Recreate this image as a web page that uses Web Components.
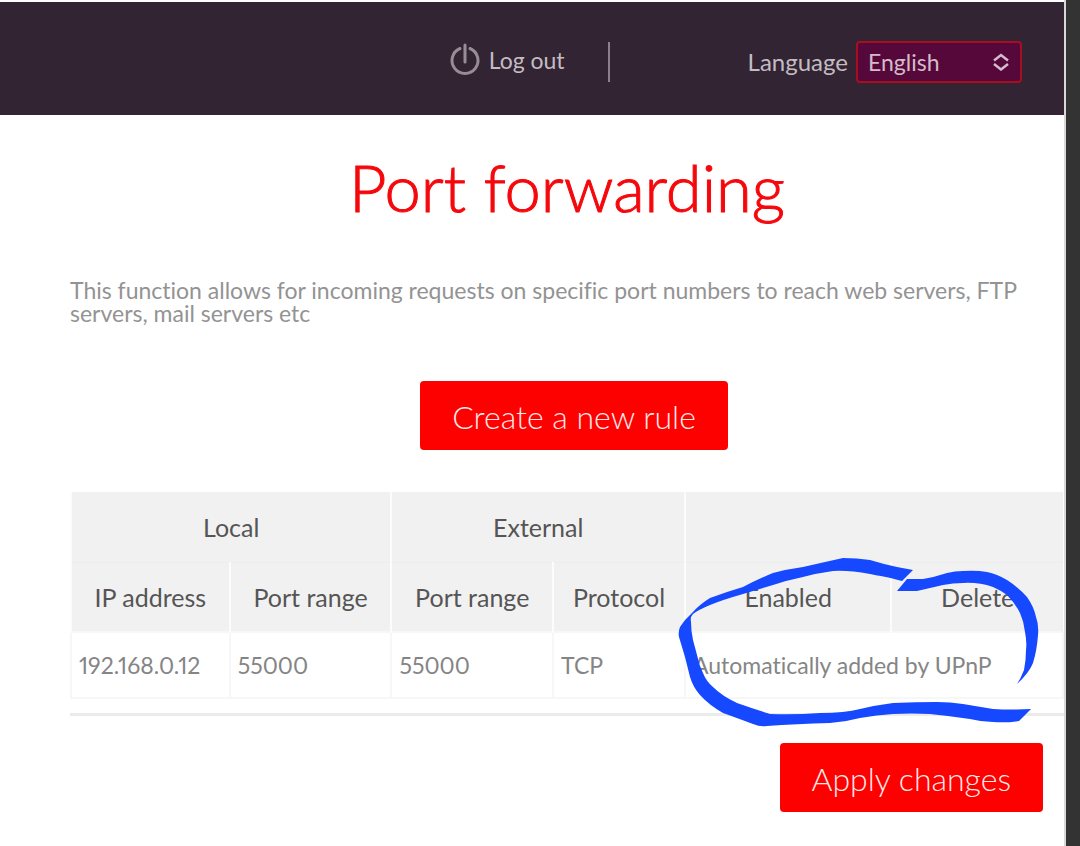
<!DOCTYPE html>
<html lang="en">
<head>
<meta charset="utf-8">
<meta name="viewport" content="width=device-width, initial-scale=1">
<title>Port forwarding</title>
<style>
html { background: #333333; }
body { margin: 0; min-height: 100vh; font-family: Lato, "Open Sans", sans-serif; font-variant-ligatures: none; font-variant-numeric: proportional-nums; }
</style>
</head>
<body>
<router-page>
  <router-header slot="header"></router-header>
  <page-title>Port forwarding</page-title>
  <page-intro>This function allows for incoming requests on specific port numbers to reach web servers, FTP servers, mail servers etc</page-intro>
  <action-row><action-button>Create a new rule</action-button></action-row>
  <rules-table></rules-table>
  <action-row align="end"><action-button>Apply changes</action-button></action-row>
</router-page>

<script>
class Base extends HTMLElement {
  constructor() {
    super();
    this.attachShadow({ mode: "open" }).innerHTML = this.constructor.markup;
  }
}

customElements.define("router-page", class extends Base {
  static markup = `
    <style>
      :host { display: block; box-sizing: border-box; min-height: 100vh; margin-right: 14px; padding-top: 2px; background: #fff; border-right: 2px solid #d8d8d8; }
      main { padding: 32px 0 32px 70px; }
    </style>
    <slot name="header"></slot>
    <main><slot></slot></main>`;
});

customElements.define("router-header", class extends Base {
  static markup = `
    <style>
      :host { display: flex; align-items: center; justify-content: flex-end; box-sizing: border-box; height: 113px; padding: 6px 42px 0 16px; background: #322432; color: #c3bcc3; font-size: 23px; line-height: 32px; }
      a { display: flex; align-items: center; gap: 8px; padding-bottom: 4px; color: inherit; text-decoration: none; }
      a svg { width: 32px; height: 34px; }
      .rule { width: 2px; height: 40px; margin: 0 138px 0 43px; background: #8b818b; }
    </style>
    <a href="#logout">
      <svg viewBox="0 0 32 34" fill="none" stroke="#968d96" stroke-width="3" stroke-linecap="round" aria-hidden="true"><path d="M11 5.500A13 13 0 1 0 21 5.500M16 2V19"/></svg>
      <span>Log out</span>
    </a>
    <div class="rule"></div>
    <language-picker></language-picker>`;
});

customElements.define("language-picker", class extends Base {
  static markup = `
    <style>
      :host { display: flex; align-items: center; gap: 8px; }
      label { font-size: 24px; }
      .box { position: relative; }
      select { display: block; appearance: none; box-sizing: border-box; width: 166px; height: 42px; padding: 0 40px 0 10px; border: 2px solid #a80e20; border-radius: 4px; background: #57083a; color: #d3bccb; font: inherit; }
      svg { position: absolute; right: 12px; top: 12px; width: 18px; height: 18px; pointer-events: none; }
    </style>
    <label for="language">Language</label>
    <div class="box">
      <select id="language"><option>English</option></select>
      <svg viewBox="0 0 18 18" fill="none" stroke="#d3bccb" stroke-width="2.500" aria-hidden="true"><path d="M2 7.500 9 2l7 5.500M2 11l7 5.500 7-5.500"/></svg>
    </div>`;
});

customElements.define("page-title", class extends Base {
  static markup = `
    <style>
      :host { display: block; }
      h1 { margin: 0; color: #f5080c; font-size: 65px; font-weight: 300; line-height: 80px; text-align: center; -webkit-text-stroke: 1px currentColor; }
    </style>
    <h1><slot></slot></h1>`;
});

customElements.define("page-intro", class extends Base {
  static markup = `
    <style>
      :host { display: block; padding: 52px 44px 56px 0; }
      p { margin: 0; color: #939393; font-size: 23px; line-height: 23px; }
    </style>
    <p><slot></slot></p>`;
});

customElements.define("action-row", class extends Base {
  static markup = `
    <style>
      :host { display: flex; justify-content: center; padding: 0 0 42px 14px; }
      :host([align="end"]) { justify-content: flex-end; padding: 27px 21px 0 0; }
    </style>
    <slot></slot>`;
});

customElements.define("action-button", class extends Base {
  static markup = `
    <style>
      :host { display: block; }
      button { display: block; box-sizing: border-box; height: 69px; padding: 2px 32px 0; border: 0; border-radius: 4px; background: #fd0000; color: #ffe8e8; font: inherit; font-size: 32px; font-weight: 300; line-height: 40px; }
    </style>
    <button type="button"><slot></slot></button>`;
});

customElements.define("rules-table", class extends Base {
  static markup = `
    <style>
      :host { display: block; position: relative; padding-bottom: 14px; border-bottom: 3px solid #ebebeb; }
      table { width: 100%; table-layout: fixed; border-collapse: collapse; }
      .c1 { width: 16%; }
      .c2, .c3 { width: 16.3%; }
      .c4 { width: 13.3%; }
      .c5 { width: 20.8%; }
      .c6 { width: 17.3%; }
      th { height: 70px; box-sizing: border-box; padding: 0; background: #f1f1f1; color: #555; font-size: 25px; font-weight: 400; line-height: 32px; border: 0 solid #fcfcfc; border-left-width: 2px; }
      tr:first-child th { border-bottom: 1px solid #ededed; }
      td { height: 66px; box-sizing: border-box; padding: 0 7px; border: 2px solid #f7f7f7; color: #858585; font-size: 23px; line-height: 32px; white-space: nowrap; }
      ink-circle { position: absolute; right: 25px; top: 66px; }
    </style>
    <table>
      <colgroup><col class="c1"><col class="c2"><col class="c3"><col class="c4"><col class="c5"><col class="c6"></colgroup>
      <thead>
        <tr><th colspan="2" scope="colgroup">Local</th><th colspan="2" scope="colgroup">External</th><th colspan="2"></th></tr>
        <tr><th scope="col">IP address</th><th scope="col">Port range</th><th scope="col">Port range</th><th scope="col">Protocol</th><th scope="col">Enabled</th><th scope="col">Delete</th></tr>
      </thead>
      <tbody>
        <tr><td>192.168.0.12</td><td>55000</td><td>55000</td><td>TCP</td><td colspan="2">Automatically added by UPnP</td></tr>
      </tbody>
    </table>
    <ink-circle></ink-circle>`;
});

customElements.define("ink-circle", class extends Base {
  static markup = `
    <style>
      :host { display: block; width: 361px; height: 170px; pointer-events: none; }
      svg { display: block; width: 100%; height: 100%; }
    </style>
    <svg viewBox="678 558 361 170" fill="#1548ff" aria-hidden="true">
      <path d="M913 570L902 581C888 577 880 576 870 574Q848 570 833 571Q818 573 803 577Q788 580 773 585L743 594Q722 600 710 605Q698 610 693 614Q690 617 691 622Q691 631 693 640L697 655Q699 665 703 673Q706 681 713 687Q722 696 737 703Q754 709 770 714Q795 715 820 713Q845 713 860 709Q877 705 893 703Q916 702 937 702Q950 702 963 704L993 709Q1012 710 1031 709L1019 721Q1006 723 993 722Q982 722 970 719Q950 716 930 714Q912 713 893 714Q877 715 860 718Q845 722 830 723Q796 724 767 726Q760 727 753 724Q737 718 723 713Q709 705 700 695Q693 687 690 677L685 657L679 637Q678 632 680 627Q685 619 692 613Q700 604 710 598Q726 592 743 587Q758 579 773 573Q788 569 803 567Q825 562 843 558Q857 558 870 560Q883 564 897 567Z"/>
      <path d="M907 579H923Q935 577 947 573Q955 571 963 571Q976 570 987 572Q997 574 1007 580Q1018 587 1027 597Q1034 607 1036 617Q1039 625 1038 635Q1037 650 1033 663Q1029 673 1017 684Q1021 678 1024 670Q1026 660 1026 650Q1027 642 1025 632Q1024 622 1020 613Q1015 603 1007 595Q1000 590 993 587Q978 582 963 583Q953 583 943 585L917 591H897Z"/>
    </svg>`;
});
</script>
</body>
</html>
